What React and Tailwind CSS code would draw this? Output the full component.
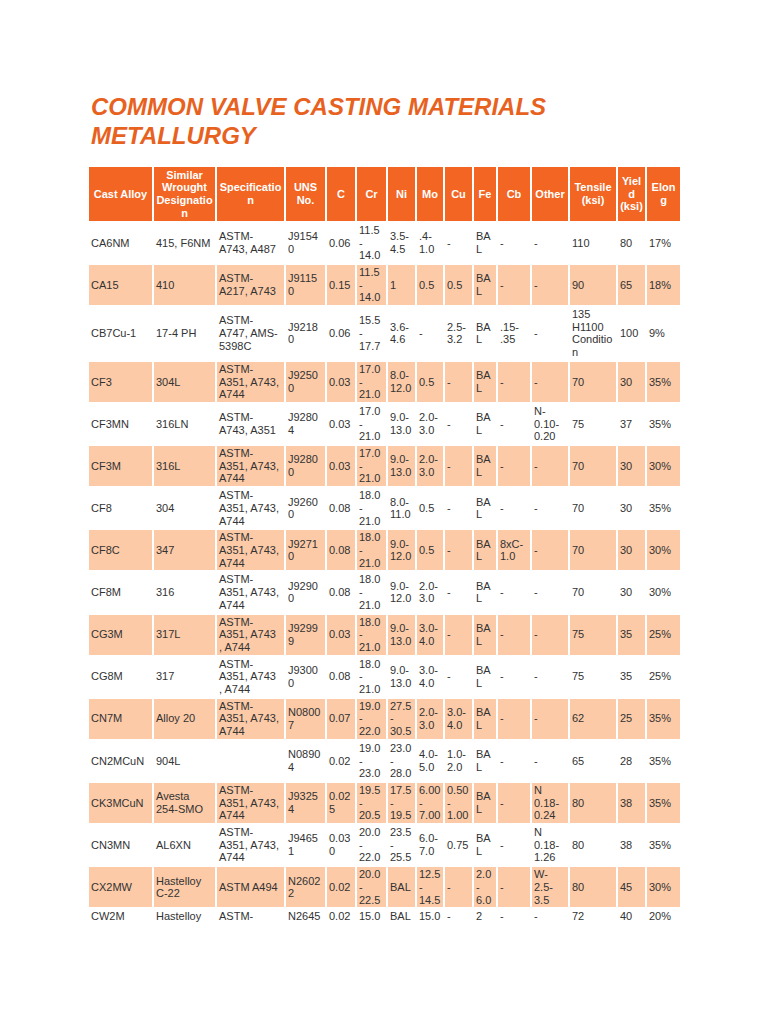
import React from 'react';

const headers = [
  'Cast Alloy',
  'Similar\nWrought\nDesignatio\nn',
  'Specificatio\nn',
  'UNS\nNo.',
  'C',
  'Cr',
  'Ni',
  'Mo',
  'Cu',
  'Fe',
  'Cb',
  'Other',
  'Tensile\n(ksi)',
  'Yiel\nd\n(ksi)',
  'Elon\ng',
];

// cell widths in px, taken from the page
const widths = [63, 61, 67, 39, 28, 29, 27, 26, 27, 22, 32, 36, 46, 27, 33];

const SPEC3 = 'ASTM-\nA351, A743,\nA744';
const SPEC3B = 'ASTM-\nA351, A743\n, A744';

const rows = [
  ['CA6NM', '415, F6NM', 'ASTM-\nA743, A487', 'J9154\n0', '0.06', '11.5\n-\n14.0', '3.5-\n4.5', '.4-\n1.0', '-', 'BA\nL', '-', '-', '110', '80', '17%'],
  ['CA15', '410', 'ASTM-\nA217, A743', 'J9115\n0', '0.15', '11.5\n-\n14.0', '1', '0.5', '0.5', 'BA\nL', '-', '-', '90', '65', '18%'],
  ['CB7Cu-1', '17-4 PH', 'ASTM-\nA747, AMS-\n5398C', 'J9218\n0', '0.06', '15.5\n-\n17.7', '3.6-\n4.6', '-', '2.5-\n3.2', 'BA\nL', '.15-\n.35', '-', '135\nH1100\nConditio\nn', '100', '9%'],
  ['CF3', '304L', SPEC3, 'J9250\n0', '0.03', '17.0\n-\n21.0', '8.0-\n12.0', '0.5', '-', 'BA\nL', '-', '-', '70', '30', '35%'],
  ['CF3MN', '316LN', 'ASTM-\nA743, A351', 'J9280\n4', '0.03', '17.0\n-\n21.0', '9.0-\n13.0', '2.0-\n3.0', '-', 'BA\nL', '-', 'N-\n0.10-\n0.20', '75', '37', '35%'],
  ['CF3M', '316L', SPEC3, 'J9280\n0', '0.03', '17.0\n-\n21.0', '9.0-\n13.0', '2.0-\n3.0', '-', 'BA\nL', '-', '-', '70', '30', '30%'],
  ['CF8', '304', SPEC3, 'J9260\n0', '0.08', '18.0\n-\n21.0', '8.0-\n11.0', '0.5', '-', 'BA\nL', '-', '-', '70', '30', '35%'],
  ['CF8C', '347', SPEC3, 'J9271\n0', '0.08', '18.0\n-\n21.0', '9.0-\n12.0', '0.5', '-', 'BA\nL', '8xC-\n1.0', '-', '70', '30', '30%'],
  ['CF8M', '316', SPEC3, 'J9290\n0', '0.08', '18.0\n-\n21.0', '9.0-\n12.0', '2.0-\n3.0', '-', 'BA\nL', '-', '-', '70', '30', '30%'],
  ['CG3M', '317L', SPEC3B, 'J9299\n9', '0.03', '18.0\n-\n21.0', '9.0-\n13.0', '3.0-\n4.0', '-', 'BA\nL', '-', '-', '75', '35', '25%'],
  ['CG8M', '317', SPEC3B, 'J9300\n0', '0.08', '18.0\n-\n21.0', '9.0-\n13.0', '3.0-\n4.0', '-', 'BA\nL', '-', '-', '75', '35', '25%'],
  ['CN7M', 'Alloy 20', SPEC3, 'N0800\n7', '0.07', '19.0\n-\n22.0', '27.5\n-\n30.5', '2.0-\n3.0', '3.0-\n4.0', 'BA\nL', '-', '-', '62', '25', '35%'],
  ['CN2MCuN', '904L', '', 'N0890\n4', '0.02', '19.0\n-\n23.0', '23.0\n-\n28.0', '4.0-\n5.0', '1.0-\n2.0', 'BA\nL', '-', '-', '65', '28', '35%'],
  ['CK3MCuN', 'Avesta\n254-SMO', SPEC3, 'J9325\n4', '0.02\n5', '19.5\n-\n20.5', '17.5\n-\n19.5', '6.00\n-\n7.00', '0.50\n-\n1.00', 'BA\nL', '-', 'N\n0.18-\n0.24', '80', '38', '35%'],
  ['CN3MN', 'AL6XN', SPEC3, 'J9465\n1', '0.03\n0', '20.0\n-\n22.0', '23.5\n-\n25.5', '6.0-\n7.0', '0.75', 'BA\nL', '-', 'N\n0.18-\n1.26', '80', '38', '35%'],
  ['CX2MW', 'Hastelloy\nC-22', 'ASTM A494', 'N2602\n2', '0.02', '20.0\n-\n22.5', 'BAL', '12.5\n-\n14.5', '-', '2.0\n-\n6.0', '-', 'W-\n2.5-\n3.5', '80', '45', '30%'],
  ['CW2M', 'Hastelloy', 'ASTM-', 'N2645', '0.02', '15.0', 'BAL', '15.0', '-', '2', '-', '-', '72', '40', '20%'],
];

export default function App() {
  return (
    <div className="min-h-[1024px] bg-white font-['Liberation_Sans',Arial,sans-serif]">
      <div className="pl-[87px] pt-[92px]">
        {/* Title */}
        <h1 className="w-[595px] pl-[4px] text-[24px] leading-[29px] font-bold italic text-[#e8621f]">
          COMMON VALVE CASTING MATERIALS METALLURGY
        </h1>

        {/* Materials table */}
        <table className="mt-[15px] w-[595px] table-fixed border-separate border-spacing-[2px] text-[11px] leading-[12.7px]">
          <colgroup>
            {widths.map((w, i) => (
              <col key={i} style={{ width: w }} />
            ))}
          </colgroup>
          <thead>
            <tr>
              {headers.map((h, i) => (
                <th
                  key={i}
                  className="bg-[#f26522] px-[2px] py-[1.5px] text-center align-middle font-bold whitespace-pre text-white"
                >
                  {h}
                </th>
              ))}
            </tr>
          </thead>
          <tbody>
            {rows.map((row, r) => (
              <tr key={r} className={r % 2 === 1 ? 'bg-[#fccaa7]' : 'bg-white'}>
                {row.map((cell, c) => (
                  <td
                    key={c}
                    className="px-[2px] py-[1px] text-left align-middle whitespace-pre text-[#333333]"
                  >
                    {cell}
                  </td>
                ))}
              </tr>
            ))}
          </tbody>
        </table>
      </div>
    </div>
  );
}
